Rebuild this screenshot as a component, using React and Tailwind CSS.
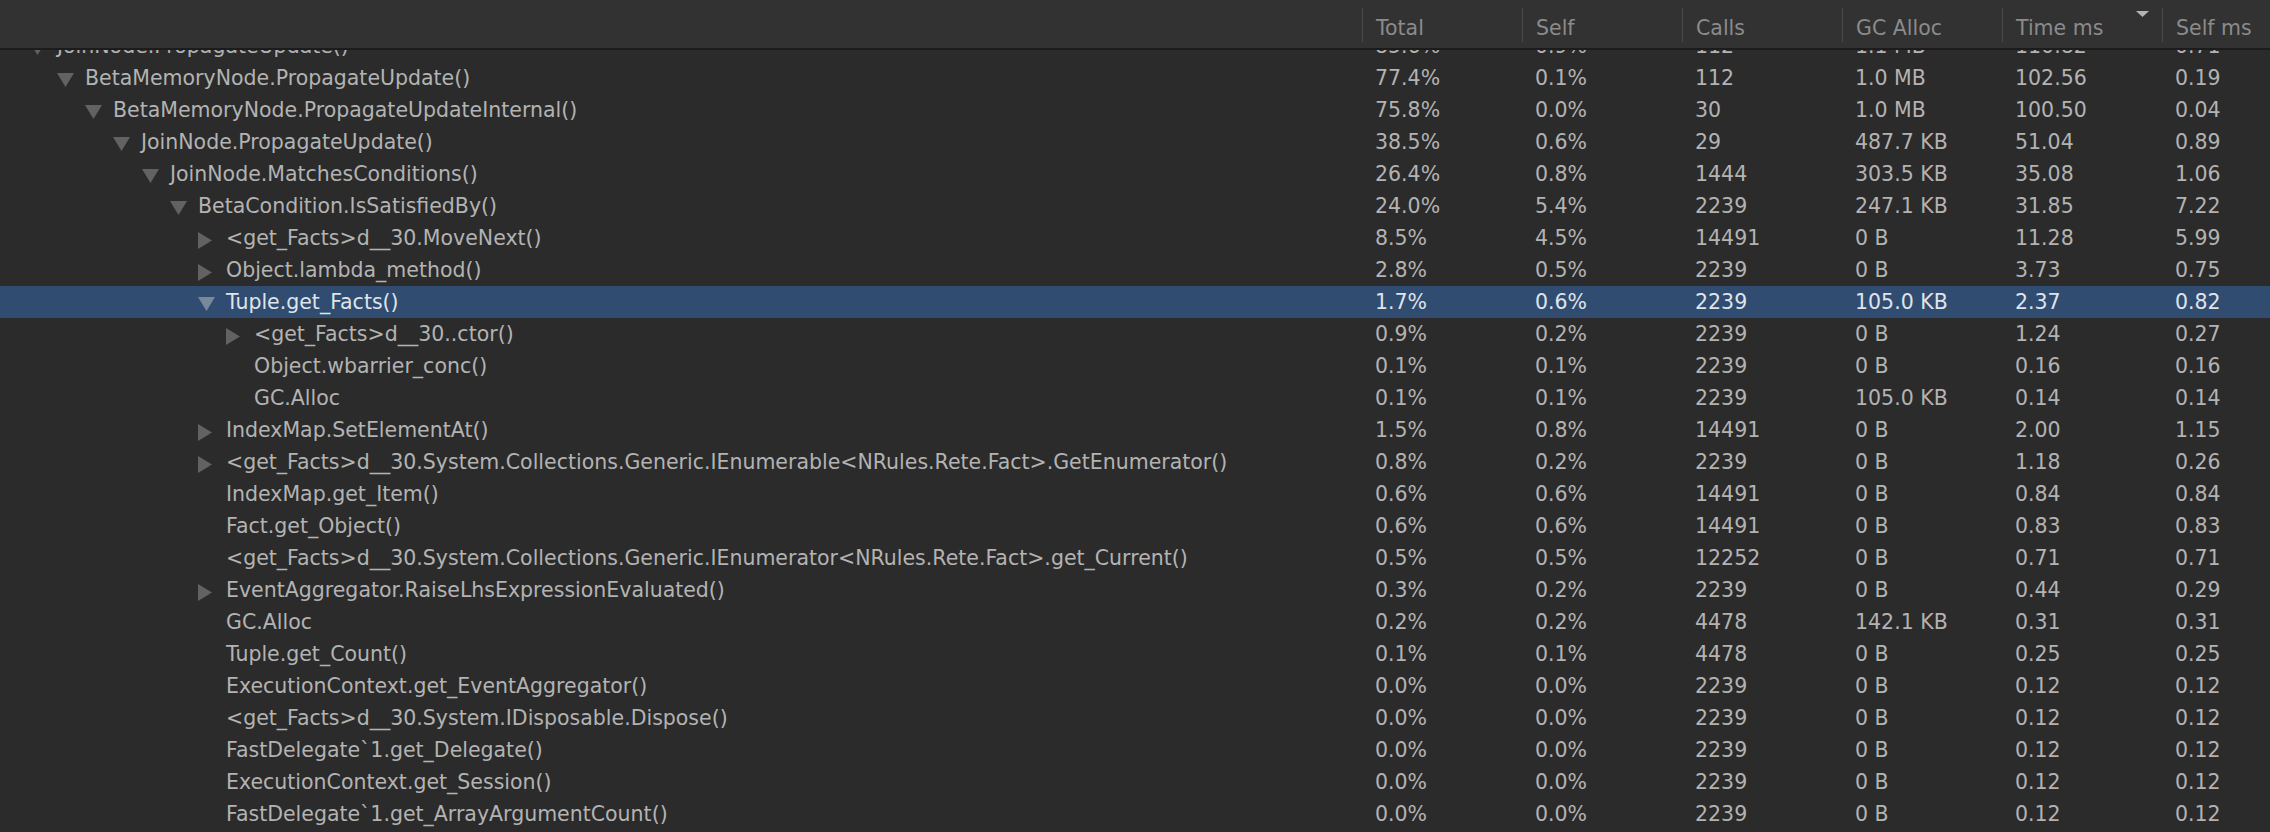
const columns = ['Total', 'Self', 'Calls', 'GC Alloc', 'Time ms', 'Self ms']

// level, state: 'open' | 'closed' | 'leaf'
const rows = [
  [0, 'open', 'JoinNode.PropagateUpdate()', '85.6%', '0.9%', '112', '1.1 MB', '110.82', '0.71'],
  [1, 'open', 'BetaMemoryNode.PropagateUpdate()', '77.4%', '0.1%', '112', '1.0 MB', '102.56', '0.19'],
  [2, 'open', 'BetaMemoryNode.PropagateUpdateInternal()', '75.8%', '0.0%', '30', '1.0 MB', '100.50', '0.04'],
  [3, 'open', 'JoinNode.PropagateUpdate()', '38.5%', '0.6%', '29', '487.7 KB', '51.04', '0.89'],
  [4, 'open', 'JoinNode.MatchesConditions()', '26.4%', '0.8%', '1444', '303.5 KB', '35.08', '1.06'],
  [5, 'open', 'BetaCondition.IsSatisfiedBy()', '24.0%', '5.4%', '2239', '247.1 KB', '31.85', '7.22'],
  [6, 'closed', '<get_Facts>d__30.MoveNext()', '8.5%', '4.5%', '14491', '0 B', '11.28', '5.99'],
  [6, 'closed', 'Object.lambda_method()', '2.8%', '0.5%', '2239', '0 B', '3.73', '0.75'],
  [6, 'open', 'Tuple.get_Facts()', '1.7%', '0.6%', '2239', '105.0 KB', '2.37', '0.82', true],
  [7, 'closed', '<get_Facts>d__30..ctor()', '0.9%', '0.2%', '2239', '0 B', '1.24', '0.27'],
  [7, 'leaf', 'Object.wbarrier_conc()', '0.1%', '0.1%', '2239', '0 B', '0.16', '0.16'],
  [7, 'leaf', 'GC.Alloc', '0.1%', '0.1%', '2239', '105.0 KB', '0.14', '0.14'],
  [6, 'closed', 'IndexMap.SetElementAt()', '1.5%', '0.8%', '14491', '0 B', '2.00', '1.15'],
  [6, 'closed', '<get_Facts>d__30.System.Collections.Generic.IEnumerable<NRules.Rete.Fact>.GetEnumerator()', '0.8%', '0.2%', '2239', '0 B', '1.18', '0.26'],
  [6, 'leaf', 'IndexMap.get_Item()', '0.6%', '0.6%', '14491', '0 B', '0.84', '0.84'],
  [6, 'leaf', 'Fact.get_Object()', '0.6%', '0.6%', '14491', '0 B', '0.83', '0.83'],
  [6, 'leaf', '<get_Facts>d__30.System.Collections.Generic.IEnumerator<NRules.Rete.Fact>.get_Current()', '0.5%', '0.5%', '12252', '0 B', '0.71', '0.71'],
  [6, 'closed', 'EventAggregator.RaiseLhsExpressionEvaluated()', '0.3%', '0.2%', '2239', '0 B', '0.44', '0.29'],
  [6, 'leaf', 'GC.Alloc', '0.2%', '0.2%', '4478', '142.1 KB', '0.31', '0.31'],
  [6, 'leaf', 'Tuple.get_Count()', '0.1%', '0.1%', '4478', '0 B', '0.25', '0.25'],
  [6, 'leaf', 'ExecutionContext.get_EventAggregator()', '0.0%', '0.0%', '2239', '0 B', '0.12', '0.12'],
  [6, 'leaf', '<get_Facts>d__30.System.IDisposable.Dispose()', '0.0%', '0.0%', '2239', '0 B', '0.12', '0.12'],
  [6, 'leaf', 'FastDelegate`1.get_Delegate()', '0.0%', '0.0%', '2239', '0 B', '0.12', '0.12'],
  [6, 'leaf', 'ExecutionContext.get_Session()', '0.0%', '0.0%', '2239', '0 B', '0.12', '0.12'],
  [6, 'leaf', 'FastDelegate`1.get_ArrayArgumentCount()', '0.0%', '0.0%', '2239', '0 B', '0.12', '0.12'],
]

const indent = ['pl-[29px]', 'pl-[57px]', 'pl-[85px]', 'pl-[113px]', 'pl-[142px]', 'pl-[170px]', 'pl-[198px]', 'pl-[226px]']

const grid = 'grid grid-cols-[1362px_160px_160px_160px_160px_160px_1fr]'

function Arrow({ state, selected }) {
  const fill = selected ? '#7a889c' : '#626262'
  if (state === 'open') {
    return (
      <svg width="17" height="14" viewBox="0 0 17 14" className="mt-[4px]">
        <polygon points="0,0 17,0 8.5,14" fill={fill} />
      </svg>
    )
  }
  if (state === 'closed') {
    return (
      <svg width="14" height="17" viewBox="0 0 14 17" className="mt-[4px]">
        <polygon points="0,0 14,8.5 0,17" fill={fill} />
      </svg>
    )
  }
  return null
}

export default function App() {
  return (
    <div
      className="w-[2270px] h-[832px] overflow-hidden bg-[#2b2b2b] flex flex-col text-[20.5px]"
      style={{ fontFamily: "'DejaVu Sans', 'Liberation Sans', sans-serif" }}
    >
      <div className={`${grid} h-[48px] shrink-0 bg-[#323232] text-[#8b8b8b]`}>
        <div />
        {columns.map((c) => (
          <div key={c} className="relative pt-[8px]">
            <div className="h-[34px] border-l border-[#4a4a4a] pl-[13px] pt-[7px] flex items-center whitespace-nowrap">
              {c}
            </div>
            {c === 'Time ms' && (
              <svg width="13" height="6" viewBox="0 0 13 6" className="absolute right-[13px] top-[11px]">
                <polygon points="0,0 13,0 6.5,6" fill="#b4b4b4" />
              </svg>
            )}
          </div>
        ))}
      </div>
      <div className="h-[2px] shrink-0 bg-[#1c1c1c]" />

      <div className="flex-1 overflow-hidden">
        <div className="-mt-[20px]">
          {rows.map((r, i) => {
            const [level, state, name, ...rest] = r
            const selected = rest[6] === true
            const vals = rest.slice(0, 6)
            return (
              <div
                key={i}
                className={`${grid} h-[32px] whitespace-nowrap ${selected ? 'bg-[#304c70] text-[#dfe4ea]' : 'text-[#b3b3b3]'}`}
              >
                <div className={`flex items-center ${indent[level]}`}>
                  <div className="w-[28px] shrink-0 flex items-center">
                    <Arrow state={state} selected={selected} />
                  </div>
                  <span>{name}</span>
                </div>
                {vals.map((v, j) => (
                  <div key={j} className="flex items-center pl-[13px]">
                    {v}
                  </div>
                ))}
              </div>
            )
          })}
        </div>
      </div>
    </div>
  )
}
